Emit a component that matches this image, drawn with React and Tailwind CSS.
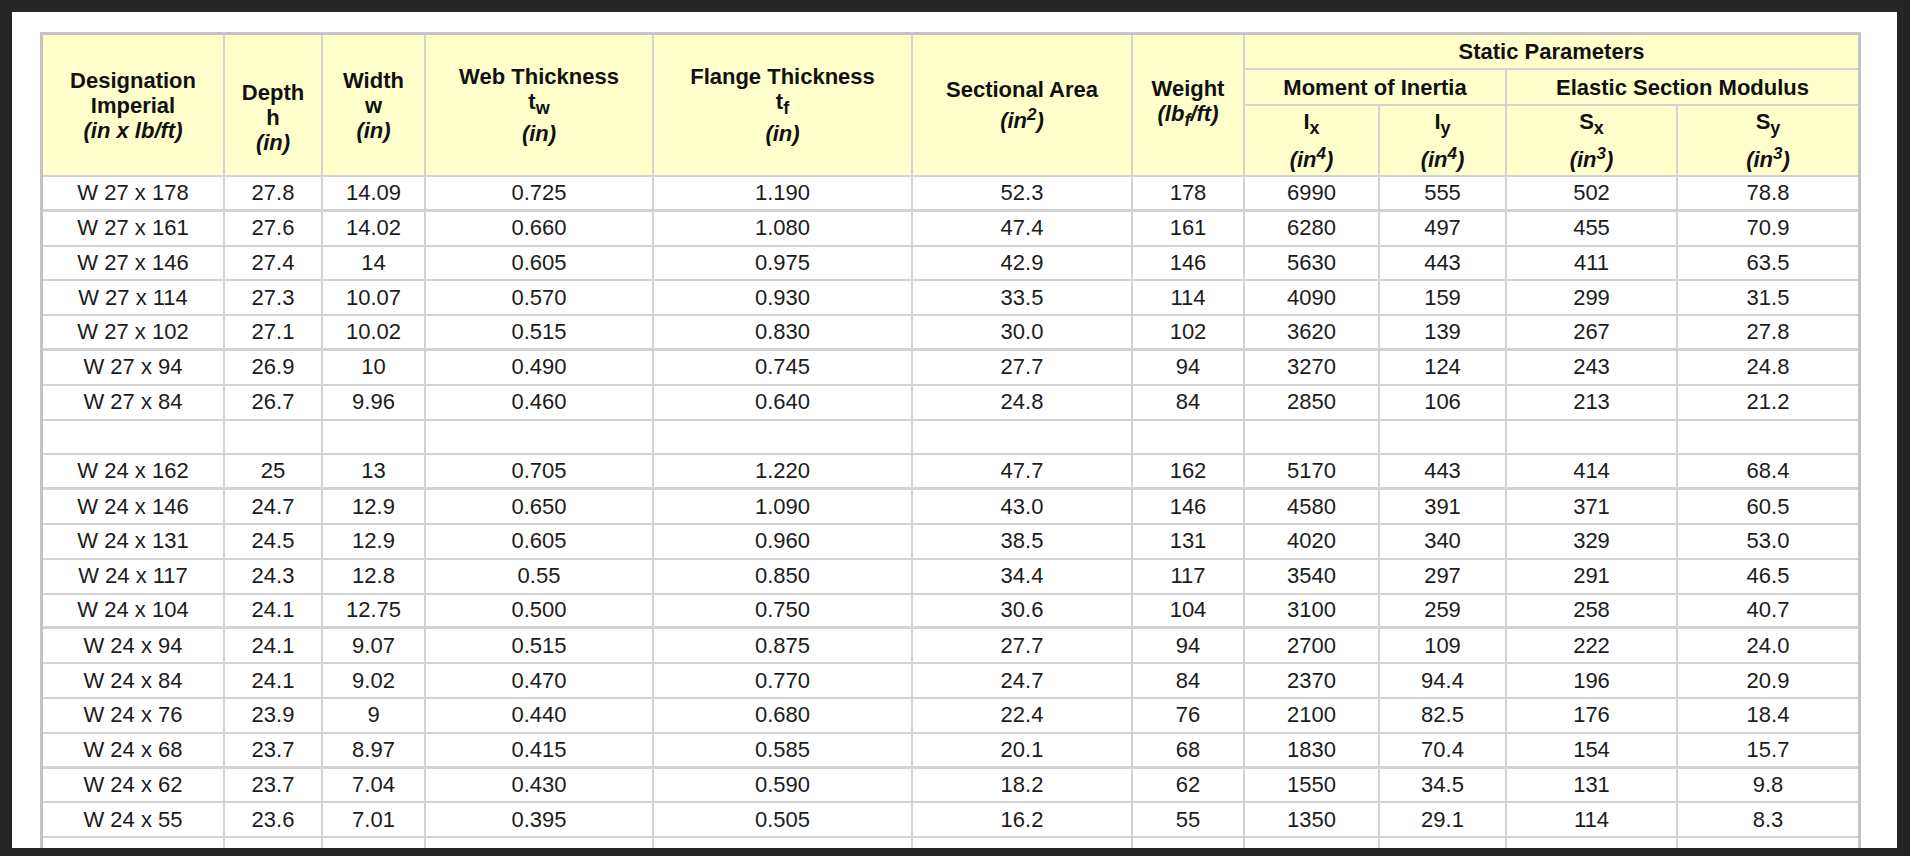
const cols = [182, 98, 103, 228, 259, 220, 112, 135, 127, 171, 180];

const rows = [
  ["W 27 x 178", "27.8", "14.09", "0.725", "1.190", "52.3", "178", "6990", "555", "502", "78.8"],
  ["W 27 x 161", "27.6", "14.02", "0.660", "1.080", "47.4", "161", "6280", "497", "455", "70.9"],
  ["W 27 x 146", "27.4", "14", "0.605", "0.975", "42.9", "146", "5630", "443", "411", "63.5"],
  ["W 27 x 114", "27.3", "10.07", "0.570", "0.930", "33.5", "114", "4090", "159", "299", "31.5"],
  ["W 27 x 102", "27.1", "10.02", "0.515", "0.830", "30.0", "102", "3620", "139", "267", "27.8"],
  ["W 27 x 94", "26.9", "10", "0.490", "0.745", "27.7", "94", "3270", "124", "243", "24.8"],
  ["W 27 x 84", "26.7", "9.96", "0.460", "0.640", "24.8", "84", "2850", "106", "213", "21.2"],
  ["", "", "", "", "", "", "", "", "", "", ""],
  ["W 24 x 162", "25", "13", "0.705", "1.220", "47.7", "162", "5170", "443", "414", "68.4"],
  ["W 24 x 146", "24.7", "12.9", "0.650", "1.090", "43.0", "146", "4580", "391", "371", "60.5"],
  ["W 24 x 131", "24.5", "12.9", "0.605", "0.960", "38.5", "131", "4020", "340", "329", "53.0"],
  ["W 24 x 117", "24.3", "12.8", "0.55", "0.850", "34.4", "117", "3540", "297", "291", "46.5"],
  ["W 24 x 104", "24.1", "12.75", "0.500", "0.750", "30.6", "104", "3100", "259", "258", "40.7"],
  ["W 24 x 94", "24.1", "9.07", "0.515", "0.875", "27.7", "94", "2700", "109", "222", "24.0"],
  ["W 24 x 84", "24.1", "9.02", "0.470", "0.770", "24.7", "84", "2370", "94.4", "196", "20.9"],
  ["W 24 x 76", "23.9", "9", "0.440", "0.680", "22.4", "76", "2100", "82.5", "176", "18.4"],
  ["W 24 x 68", "23.7", "8.97", "0.415", "0.585", "20.1", "68", "1830", "70.4", "154", "15.7"],
  ["W 24 x 62", "23.7", "7.04", "0.430", "0.590", "18.2", "62", "1550", "34.5", "131", "9.8"],
  ["W 24 x 55", "23.6", "7.01", "0.395", "0.505", "16.2", "55", "1350", "29.1", "114", "8.3"],
  ["", "", "", "", "", "", "", "", "", "", ""],
];

function Sub({ children }) {
  return <span className="align-sub text-[18px]">{children}</span>;
}

function Sup({ children }) {
  return <span className="align-super text-[17px]">{children}</span>;
}

const th =
  "border-r-2 border-b-2 border-[#d3d3d3] bg-[#ffffcc] px-1 text-center align-middle font-bold leading-[25px] text-[#111] last:border-r-0";

function App() {
  return (
    <div className="h-screen overflow-hidden bg-[#252525] pt-3 pr-[13px] pb-2 pl-3">
      <div className="h-full overflow-hidden bg-white pt-5 pl-7 font-['Liberation_Sans',Arial,sans-serif] text-[22px]">
        <table className="w-[1821px] table-fixed border-separate border-spacing-0 border-[3px] border-[#c4c4c4]">
          <colgroup>
            {cols.map((w, i) => (
              <col key={i} style={{ width: w }} />
            ))}
          </colgroup>
          <thead>
            <tr className="h-[35px]">
              <th rowSpan={3} className={th}>
                Designation
                <br />
                Imperial
                <br />
                <i>(in x lb/ft)</i>
              </th>
              <th rowSpan={3} className={th + " pt-[25px]"}>
                Depth
                <br />h<br />
                <i>(in)</i>
              </th>
              <th rowSpan={3} className={th}>
                Width
                <br />w<br />
                <i>(in)</i>
              </th>
              <th rowSpan={3} className={th}>
                Web Thickness
                <br />
                t<Sub>w</Sub>
                <br />
                <i>(in)</i>
              </th>
              <th rowSpan={3} className={th}>
                Flange Thickness
                <br />
                t<Sub>f</Sub>
                <br />
                <i>(in)</i>
              </th>
              <th rowSpan={3} className={th}>
                Sectional Area
                <br />
                <i>
                  (in<Sup>2</Sup>)
                </i>
              </th>
              <th rowSpan={3} className={th}>
                Weight
                <br />
                <i>
                  (lb<Sub>f</Sub>/ft)
                </i>
              </th>
              <th colSpan={4} className={th}>
                Static Parameters
              </th>
            </tr>
            <tr className="h-[36px]">
              <th colSpan={2} className={th}>
                Moment of Inertia
              </th>
              <th colSpan={2} className={th}>
                Elastic Section Modulus
              </th>
            </tr>
            <tr className="h-[71px]">
              <th className={th}>
                I<Sub>x</Sub>
                <br />
                <i>
                  (in<Sup>4</Sup>)
                </i>
              </th>
              <th className={th}>
                I<Sub>y</Sub>
                <br />
                <i>
                  (in<Sup>4</Sup>)
                </i>
              </th>
              <th className={th}>
                S<Sub>x</Sub>
                <br />
                <i>
                  (in<Sup>3</Sup>)
                </i>
              </th>
              <th className={th}>
                S<Sub>y</Sub>
                <br />
                <i>
                  (in<Sup>3</Sup>)
                </i>
              </th>
            </tr>
          </thead>
          <tbody>
            {rows.map((row, i) => (
              <tr key={i} className="h-[34.8px]">
                {row.map((cell, j) => (
                  <td
                    key={j}
                    className={
                      "border-r-2 border-[#d3d3d3] text-center align-middle leading-none text-[#1c1c1c] last:border-r-0 " +
                      (i % 4 === 0 ? "border-b-[3px]" : "border-b-2")
                    }
                  >
                    {cell}
                  </td>
                ))}
              </tr>
            ))}
          </tbody>
        </table>
      </div>
    </div>
  );
}

export default App;
